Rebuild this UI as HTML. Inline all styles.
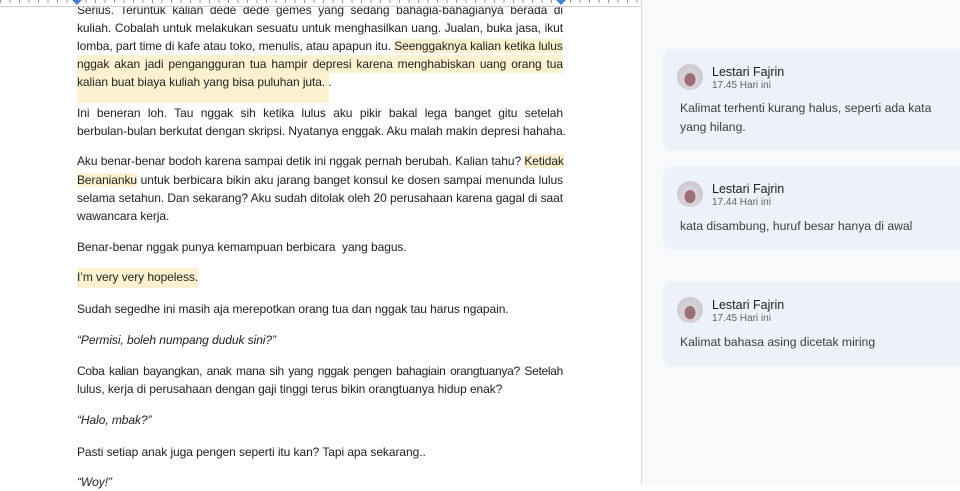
<html><head><style>
body{margin:0;width:960px;height:485px;overflow:hidden;background:#fff;font-family:"Liberation Sans",sans-serif;position:relative}
.l{position:absolute;left:77px;width:486px;font-size:12px;letter-spacing:-0.07px;color:#222;line-height:18px;white-space:nowrap;height:18px}
.j{text-align:justify;text-align-last:justify;white-space:normal}
.h{background:#fdf1d0}
.i{font-style:italic}
#rp{position:absolute;left:641px;top:0;width:319px;height:485px;background:#f8f9fb;border-left:1px solid #dadce0}
.c{position:absolute;left:21px;width:310px;background:#edf1f9;border-radius:9px}
.av{position:absolute;left:14px;top:15px;width:26px;height:26px;border-radius:50%;background:radial-gradient(ellipse at 50% 60%,#9a6f78 0 28%,#d9d4da 32%,#c4bfc6 100%)}
.n{position:absolute;left:49px;top:16px;font-size:12.5px;color:#202124}
.t{position:absolute;left:49px;top:31px;font-size:10px;color:#5f6368}
.m{position:absolute;left:17px;font-size:12.2px;color:#3c4043;line-height:19px}
#ruler{position:absolute;left:0;top:0;width:641px;height:6px;background:#fff;border-bottom:1px solid #ccc;overflow:hidden;background-image:repeating-linear-gradient(90deg,#999 0 1px,transparent 1px 9.5px);background-size:100% 3px;background-repeat:no-repeat}
</style></head><body>
<div id="ruler"></div>
<div style="position:absolute;left:72px;top:0;width:10px;height:5px;background:#4a7fd8;clip-path:polygon(0 0,100% 0,50% 100%)"></div>
<div style="position:absolute;left:556px;top:0;width:10px;height:5px;background:#4a7fd8;clip-path:polygon(0 0,100% 0,50% 100%)"></div>
<div class="l j" style="top:1px;clip-path:inset(6px 0 0 0)">Serius. Teruntuk kalian dede dede gemes yang sedang bahagia-bahagianya berada di bangku</div>
<div class="l j" style="top:19px">kuliah. Cobalah untuk melakukan sesuatu untuk menghasilkan uang. Jualan, buka jasa, ikut</div>
<div class="l" style="top:37px">lomba, part time di kafe atau toko, menulis, atau apapun itu. <span class="h">Seenggaknya kalian ketika lulus</span></div>
<div class="l j h" style="top:55px">nggak akan jadi pengangguran tua hampir depresi karena menghabiskan uang orang tua</div>
<div class="l h" style="top:73px;width:252px;height:30px">kalian buat biaya kuliah yang bisa puluhan juta. .</div>
<div class="l j" style="top:104px">Ini beneran loh. Tau nggak sih ketika lulus aku pikir bakal lega banget gitu setelah</div>
<div class="l" style="top:122px">berbulan-bulan berkutat dengan skripsi. Nyatanya enggak. Aku malah makin depresi hahaha.</div>
<div class="l" style="top:152px">Aku benar-benar bodoh karena sampai detik ini nggak pernah berubah. Kalian tahu? <span class="h">Ketidak</span></div>
<div class="l j" style="top:171px"><span class="h">Beranianku</span> untuk berbicara bikin aku jarang banget konsul ke dosen sampai menunda lulus</div>
<div class="l j" style="top:189px">selama setahun. Dan sekarang? Aku sudah ditolak oleh 20 perusahaan karena gagal di saat</div>
<div class="l" style="top:207px">wawancara kerja.</div>
<div class="l" style="top:238px">Benar-benar nggak punya kemampuan berbicara&nbsp; yang bagus.</div>
<div class="l h" style="top:268px;width:121px;height:20px">I’m very very hopeless.</div>
<div class="l" style="top:300px">Sudah segedhe ini masih aja merepotkan orang tua dan nggak tau harus ngapain.</div>
<div class="l i" style="top:331px">“Permisi, boleh numpang duduk sini?”</div>
<div class="l j" style="top:362px;letter-spacing:-0.3px">Coba kalian bayangkan, anak mana sih yang nggak pengen bahagiain orangtuanya? Setelah</div>
<div class="l" style="top:380px">lulus, kerja di perusahaan dengan gaji tinggi terus bikin orangtuanya hidup enak?</div>
<div class="l i" style="top:411px">“Halo, mbak?”</div>
<div class="l" style="top:443px">Pasti setiap anak juga pengen seperti itu kan? Tapi apa sekarang..</div>
<div class="l i" style="top:473px">“Woy!”</div>
<div id="rp">
<div class="c" style="top:49px;height:101px"><div class="av"></div><div class="n">Lestari Fajrin</div><div class="t">17.45 Hari ini</div><div class="m" style="top:50px">Kalimat terhenti kurang halus, seperti ada kata<br>yang hilang.</div></div>
<div class="c" style="top:166px;height:84px"><div class="av"></div><div class="n">Lestari Fajrin</div><div class="t">17.44 Hari ini</div><div class="m" style="top:51px">kata disambung, huruf besar hanya di awal</div></div>
<div class="c" style="top:282px;height:84px"><div class="av"></div><div class="n">Lestari Fajrin</div><div class="t">17.45 Hari ini</div><div class="m" style="top:51px">Kalimat bahasa asing dicetak miring</div></div>
</div>
</body></html>
